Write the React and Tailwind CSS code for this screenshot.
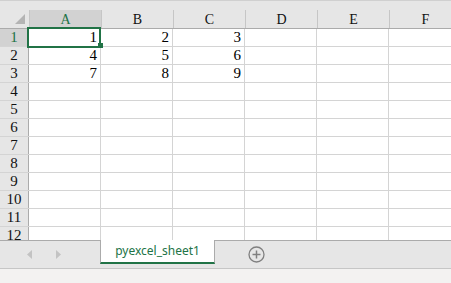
import React from "react";

const COLS = ["A", "B", "C", "D", "E", "F"];
const DATA = [
  [1, 2, 3],
  [4, 5, 6],
  [7, 8, 9],
];
const ROWS = Array.from({ length: 12 }, (_, i) => i + 1);
const serif = { fontFamily: '"Liberation Serif", "DejaVu Serif", serif' };

export default function App() {
  return (
    <div className="relative w-[451px] h-[283px] overflow-hidden bg-white flex flex-col" style={serif}>
      {/* top strip */}
      <div className="h-[10px] shrink-0 bg-[#e6e6e6] border-t border-[#d0d0d0]" />
      {/* column header row */}
      <div className="h-[19px] shrink-0 flex bg-[#e6e6e6] border-b border-[#ababab]">
        <div className="w-[29px] shrink-0 relative">
          <svg className="absolute left-[15px] top-[4px]" width="10" height="10" viewBox="0 0 10 10">
            <polygon points="10,0 10,10 0,10" fill="#b4b4b4" />
          </svg>
        </div>
        {COLS.map((c, i) => (
          <div
            key={c}
            className={
              "w-[72px] shrink-0 border-l border-[#c6c6c6] flex items-end justify-center text-[14px] leading-[17px] " +
              (i === 0 ? "bg-[#d2d2d2] text-[#217346]" : "text-[#111]")
            }
          >
            {c}
          </div>
        ))}
      </div>
      {/* grid */}
      <div className="h-[211px] shrink-0 overflow-hidden">
        {ROWS.map((r) => (
          <div key={r} className="h-[18px] flex border-b border-[#d4d4d4]">
            <div
              className={
                "w-[29px] shrink-0 border-r border-[#ababab] flex items-end justify-center text-[15px] leading-[15px] pb-[1px] " +
                (r === 1 ? "bg-[#d2d2d2] text-[#217346]" : "bg-[#e6e6e6] text-[#111]")
              }
            >
              {r}
            </div>
            {COLS.map((c, ci) => (
              <div
                key={c}
                className="w-[72px] shrink-0 border-r border-[#d4d4d4] flex items-end justify-end pr-[3px] pb-[1px] text-[15px] leading-[15px] text-black"
              >
                {DATA[r - 1] && DATA[r - 1][ci] !== undefined ? DATA[r - 1][ci] : ""}
              </div>
            ))}
          </div>
        ))}
      </div>
      {/* sheet tab bar */}
      <div className="h-[28px] shrink-0 flex bg-[#e6e6e6]">
        <div className="w-[100px] shrink-0 border-t border-[#ababab] flex items-center gap-[24px] pl-[27px]">
          <svg width="5" height="9" viewBox="0 0 5 9">
            <polygon points="5,0 5,9 0,4.5" fill="#c3c3c3" />
          </svg>
          <svg width="5" height="9" viewBox="0 0 5 9">
            <polygon points="0,0 0,9 5,4.5" fill="#c3c3c3" />
          </svg>
        </div>
        <div
          className="w-[115px] h-[24px] shrink-0 bg-white border-l border-r border-[#ababab] border-b-2 border-b-[#217346] flex items-center justify-center text-[12px] text-[#217346]"
          style={{ fontFamily: '"Noto Sans", "Open Sans", sans-serif' }}
        >
          pyexcel_sheet1
        </div>
        <div className="flex-1 border-t border-[#ababab] flex items-start pt-[5px] pl-[33px]">
          <svg width="17" height="17" viewBox="0 0 17 17">
            <circle cx="8.5" cy="8.5" r="7.5" fill="none" stroke="#808080" strokeWidth="1.3" />
            <line x1="4.5" y1="8.5" x2="12.5" y2="8.5" stroke="#808080" strokeWidth="1.5" />
            <line x1="8.5" y1="4.5" x2="8.5" y2="12.5" stroke="#808080" strokeWidth="1.5" />
          </svg>
        </div>
      </div>
      {/* bottom status strip */}
      <div className="flex-1 bg-[#f3f2f1] border-t border-[#c6c6c6]" />

      {/* selection overlay */}
      <div className="absolute left-[27px] top-[27px] w-[74px] h-[21px] border-2 border-[#217346] pointer-events-none" />
      <div className="absolute left-[98px] top-[43px] w-[5px] h-[5px] bg-[#217346] pointer-events-none" />
    </div>
  );
}
